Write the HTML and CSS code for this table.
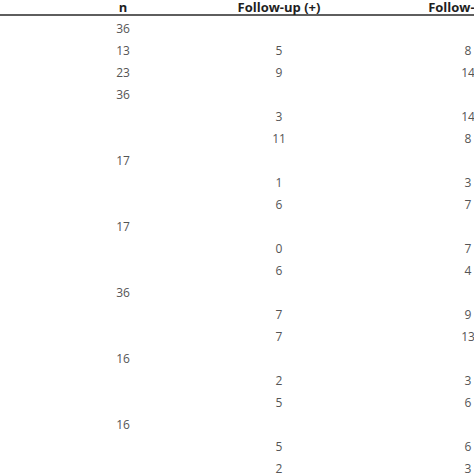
FILE: index.html
```html
<!DOCTYPE html>
<html>
<head>
<meta charset="utf-8">
<link rel="stylesheet" href="styles.css">
</head>
<body>
<div class="sheet">
  <div class="row head">
    <span class="cell"></span><span class="cell">n</span><span class="cell">Follow-up (+)</span><span class="cell">Follow-up (-)</span>
  </div>
  <hr class="rule">
  <div class="body">
    <div class="row"><span class="cell"></span><span class="cell">36</span><span class="cell"></span><span class="cell"></span></div>
    <div class="row"><span class="cell"></span><span class="cell">13</span><span class="cell">5</span><span class="cell">8</span></div>
    <div class="row"><span class="cell"></span><span class="cell">23</span><span class="cell">9</span><span class="cell">14</span></div>
    <div class="row"><span class="cell"></span><span class="cell">36</span><span class="cell"></span><span class="cell"></span></div>
    <div class="row"><span class="cell"></span><span class="cell"></span><span class="cell">3</span><span class="cell">14</span></div>
    <div class="row"><span class="cell"></span><span class="cell"></span><span class="cell">11</span><span class="cell">8</span></div>
    <div class="row"><span class="cell"></span><span class="cell">17</span><span class="cell"></span><span class="cell"></span></div>
    <div class="row"><span class="cell"></span><span class="cell"></span><span class="cell">1</span><span class="cell">3</span></div>
    <div class="row"><span class="cell"></span><span class="cell"></span><span class="cell">6</span><span class="cell">7</span></div>
    <div class="row"><span class="cell"></span><span class="cell">17</span><span class="cell"></span><span class="cell"></span></div>
    <div class="row"><span class="cell"></span><span class="cell"></span><span class="cell">0</span><span class="cell">7</span></div>
    <div class="row"><span class="cell"></span><span class="cell"></span><span class="cell">6</span><span class="cell">4</span></div>
    <div class="row"><span class="cell"></span><span class="cell">36</span><span class="cell"></span><span class="cell"></span></div>
    <div class="row"><span class="cell"></span><span class="cell"></span><span class="cell">7</span><span class="cell">9</span></div>
    <div class="row"><span class="cell"></span><span class="cell"></span><span class="cell">7</span><span class="cell">13</span></div>
    <div class="row"><span class="cell"></span><span class="cell">16</span><span class="cell"></span><span class="cell"></span></div>
    <div class="row"><span class="cell"></span><span class="cell"></span><span class="cell">2</span><span class="cell">3</span></div>
    <div class="row"><span class="cell"></span><span class="cell"></span><span class="cell">5</span><span class="cell">6</span></div>
    <div class="row"><span class="cell"></span><span class="cell">16</span><span class="cell"></span><span class="cell"></span></div>
    <div class="row"><span class="cell"></span><span class="cell"></span><span class="cell">5</span><span class="cell">6</span></div>
    <div class="row"><span class="cell"></span><span class="cell"></span><span class="cell">2</span><span class="cell">3</span></div>
  </div>
</div>
</body>
</html>
```

FILE: styles.css
```css
html, body {
  margin: 0;
  padding: 0;
  background: #ffffff;
  overflow: hidden;
}

.sheet {
  width: 534px;
  font-family: "Open Sans", "Noto Sans", sans-serif;
  font-size: 12px;
  color: #555555;
}

.row {
  display: grid;
  grid-template-columns: 90px 66px 246px 132px;
  height: 22px;
  line-height: 22px;
}

.cell {
  text-align: center;
  white-space: nowrap;
}

.row.head {
  height: 14px;
  line-height: 14px;
  font-size: 13px;
  font-weight: 700;
  color: #1f1f1f;
}

.rule {
  display: block;
  margin: 0;
  padding: 0;
  border: 0;
  height: 2px;
  width: 534px;
  background: #5e5e5e;
}

.body {
  padding-top: 2px;
}
```
